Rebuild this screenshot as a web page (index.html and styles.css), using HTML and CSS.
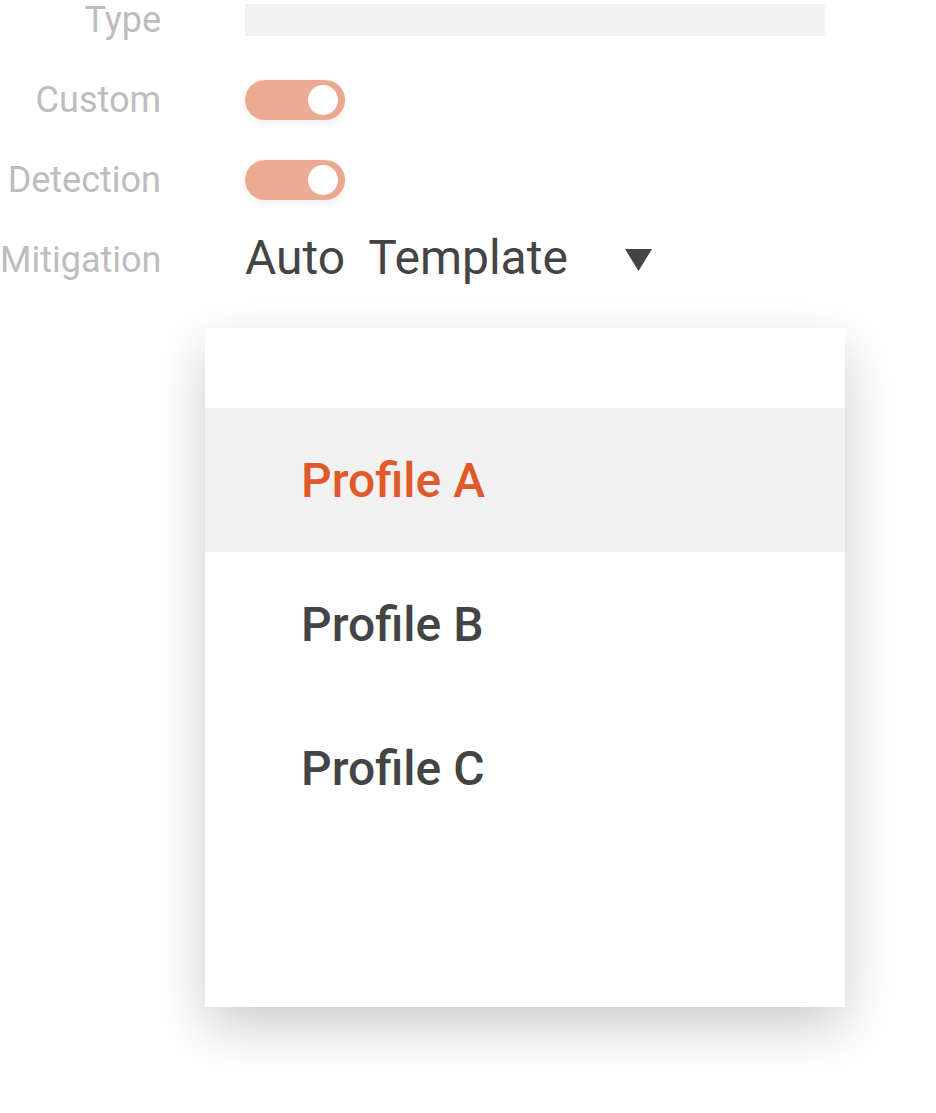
FILE: index.html
```html
<!DOCTYPE html>
<html>
<head>
<meta charset="utf-8">
<link rel="stylesheet" href="styles.css">
</head>
<body>
<div class="form">
  <div class="row">
    <div class="label">Type</div>
    <div class="value"><div class="input"></div></div>
  </div>
  <div class="row">
    <div class="label">Custom</div>
    <div class="value"><div class="toggle"><span class="knob"></span></div></div>
  </div>
  <div class="row">
    <div class="label">Detection</div>
    <div class="value"><div class="toggle"><span class="knob"></span></div></div>
  </div>
  <div class="row">
    <div class="label">Mitigation</div>
    <div class="value select">
      <span class="word">Auto</span><span class="word">Template</span>
      <svg class="caret" width="27" height="22" viewBox="0 0 27 22"><polygon points="0,0 27,0 13.5,22" fill="#444"/></svg>
    </div>
  </div>
</div>
<div class="menu">
  <div class="menu-top"></div>
  <div class="item active">Profile A</div>
  <div class="item">Profile B</div>
  <div class="item">Profile C</div>
</div>
</body>
</html>
```
FILE: styles.css
```css
html, body {
  margin: 0;
  padding: 0;
  background: #fff;
  font-family: Roboto, "Liberation Sans", sans-serif;
}
body {
  padding-bottom: 106px;
}
.form {
  margin-top: -20px;
  display: flex;
  flex-direction: column;
}
.row {
  height: 80px;
  display: flex;
  align-items: center;
}
.label {
  width: 161px;
  text-align: right;
  font-size: 36px;
  color: #bdbdbd;
  flex: none;
}
.value {
  margin-left: 84px;
  display: flex;
  align-items: center;
}
.input {
  width: 580px;
  height: 32px;
  background: #f1f1f1;
}
.toggle {
  width: 100px;
  height: 40px;
  border-radius: 20px;
  background: linear-gradient(90deg, #eeab94 0%, #eeab94 60%, #e9a68f 100%);
  box-shadow: 0 2px 10px rgba(0,0,0,0.08);
  display: flex;
  align-items: center;
  justify-content: flex-end;
  padding-right: 7px;
  box-sizing: border-box;
}
.knob {
  width: 30px;
  height: 30px;
  border-radius: 50%;
  background: #fff;
}
.select {
  margin-left: 84px;
  font-size: 48px;
  color: #444;
  padding-bottom: 6px;
}
.word + .word {
  margin-left: 23px;
}
.caret {
  margin-left: 57px;
  margin-top: 6px;
}
.menu {
  margin: 28px 0 0 205px;
  width: 640px;
  height: 679px;
  background: #fff;
  box-shadow: 0 20px 50px rgba(0,0,0,0.2);
}
.menu-top {
  height: 80px;
}
.item {
  height: 144px;
  display: flex;
  align-items: center;
  padding-left: 96px;
  font-size: 48px;
  font-weight: 500;
  color: #444;
}
.item.active {
  background: #f1f1f1;
  color: #e0592b;
}
```
